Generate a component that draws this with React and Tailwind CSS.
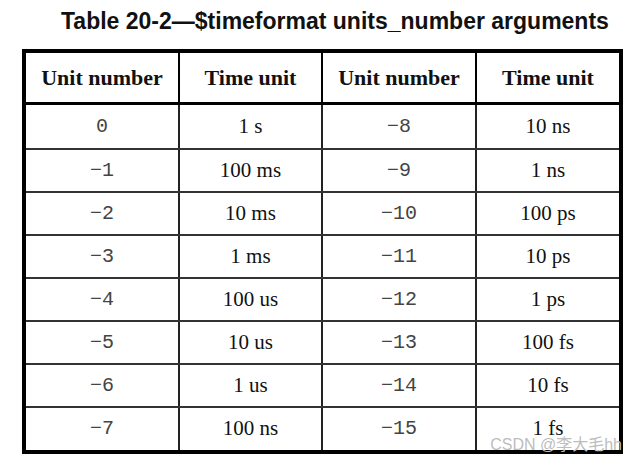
import React from "react";

const rows = [
  ["0", "1 s", "\u22128", "10 ns"],
  ["\u22121", "100 ms", "\u22129", "1 ns"],
  ["\u22122", "10 ms", "\u221210", "100 ps"],
  ["\u22123", "1 ms", "\u221211", "10 ps"],
  ["\u22124", "100 us", "\u221212", "1 ps"],
  ["\u22125", "10 us", "\u221213", "100 fs"],
  ["\u22126", "1 us", "\u221214", "10 fs"],
  ["\u22127", "100 ns", "\u221215", "1 fs"],
];

const serif = { fontFamily: '"Liberation Serif", "Times New Roman", serif' };
const mono = { fontFamily: '"Liberation Mono", "Courier New", monospace' };

export default function App() {
  return (
    <div className="relative w-[637px] h-[464px] bg-white overflow-hidden">
      <div
        className="h-[49px] flex items-center pl-[61px] pb-[7px] text-[23px] font-bold text-[#111]"
        style={{ fontFamily: '"Liberation Sans", Arial, sans-serif' }}
      >
        Table 20-2—$timeformat units_number arguments
      </div>
      <div className="ml-[22px] w-[601px] border-4 border-black flex flex-col">
        <div
          className="flex h-[52px] border-b-[3px] border-black text-[22px] font-bold text-[#111]"
          style={serif}
        >
          <div className="w-[152px] flex items-center justify-center">Unit number</div>
          <div className="w-[143px] border-l-2 border-black flex items-center justify-center">Time unit</div>
          <div className="w-[154px] border-l-2 border-black flex items-center justify-center">Unit number</div>
          <div className="flex-1 border-l-2 border-black flex items-center justify-center">Time unit</div>
        </div>
        {rows.map((r, i) => (
          <div
            key={i}
            className={
              "flex " +
              (i === 0 ? "h-[43px]" : i === 7 ? "h-[44px] border-t-2 border-[#333]" : "h-[43px] border-t-2 border-[#333]")
            }
          >
            <div className="w-[152px] flex items-center justify-center text-[20px] text-[#444]" style={mono}>
              {r[0]}
            </div>
            <div className="w-[143px] border-l-2 border-[#222] flex items-center justify-center text-[21px] text-[#111]" style={serif}>
              {r[1]}
            </div>
            <div className="w-[154px] border-l-2 border-[#222] flex items-center justify-center text-[20px] text-[#444]" style={mono}>
              {r[2]}
            </div>
            <div className="flex-1 border-l-2 border-[#222] flex items-center justify-center text-[21px] text-[#111]" style={serif}>
              {r[3]}
            </div>
          </div>
        ))}
      </div>
      <div
        className="absolute right-[15px] bottom-[11px] text-[16px] text-[#bdbdbd] leading-none"
        style={{ fontFamily: '"Liberation Sans", "Noto Sans CJK SC", sans-serif' }}
      >
        CSDN @李大毛hh
      </div>
    </div>
  );
}
